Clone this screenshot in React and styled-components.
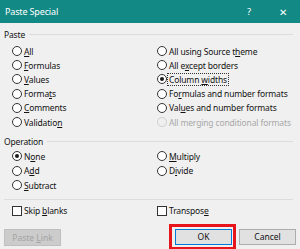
import React from "react";
import styled, { createGlobalStyle } from "styled-components";

const Global = createGlobalStyle`
  html, body { margin: 0; padding: 0; background: #f0f0f0; }
  body { font-family: "Noto Sans", "Liberation Sans", sans-serif; }
`;

const Dialog = styled.div`
  width: 300px;
  height: 249px;
  background: #f0f0f0;
  display: flex;
  flex-direction: column;
  overflow: hidden;
  color: #121212;
  font-size: 8.5px;
  letter-spacing: -0.15px;
`;

const TitleBar = styled.div`
  height: 23px;
  flex: none;
  background: #138985;
  color: #ffffff;
  display: flex;
  align-items: center;
  padding-left: 5px;
  font-size: 9px;
`;

const Title = styled.span`
  flex: 1;
`;

const TitleButton = styled.span`
  width: 34px;
  text-align: center;
  font-size: ${(p) => (p.$small ? "10px" : "9.5px")};
`;

const Body = styled.div`
  flex: 1;
  display: flex;
  flex-direction: column;
  padding: 0 4px;
`;

const SectionHeader = styled.div`
  display: flex;
  align-items: center;
  gap: 4px;
  height: 12px;
  margin-top: ${(p) => p.$top}px;
  margin-right: 3px;
  &::after {
    content: "";
    flex: 1;
    height: 1px;
    background: #dcdcdc;
  }
`;

const Options = styled.div`
  display: grid;
  grid-template-columns: 145px 1fr;
  grid-auto-rows: ${(p) => p.$row}px;
  grid-auto-flow: ${(p) => (p.$flow ? p.$flow : "row")};
  grid-template-rows: ${(p) => (p.$rows ? `repeat(${p.$rows}, ${p.$row}px)` : "none")};
  padding-left: 8px;
  margin-top: ${(p) => p.$top}px;
`;

const Option = styled.div`
  display: flex;
  align-items: center;
  gap: 0;
  white-space: nowrap;
  color: ${(p) => (p.$disabled ? "#a8a8a8" : "inherit")};
`;

const Radio = styled.span`
  width: 10px;
  height: 10px;
  box-sizing: border-box;
  border-radius: 50%;
  border: 1px solid ${(p) => (p.$disabled ? "#cfcfcf" : "#333333")};
  background: ${(p) => (p.$disabled ? "#f0f0f0" : "#ffffff")};
  display: flex;
  align-items: center;
  justify-content: center;
  flex: none;
  &::after {
    content: "";
    width: 4px;
    height: 4px;
    border-radius: 50%;
    background: ${(p) => (p.$checked ? "#1c1c1c" : "transparent")};
  }
`;

const Check = styled.span`
  width: 10px;
  height: 10px;
  box-sizing: border-box;
  border: 1px solid #333333;
  background: #ffffff;
  flex: none;
`;

const Label = styled.span`
  border: 1px ${(p) => (p.$focus ? "dotted #333" : "solid transparent")};
  padding: 0 1px;
  line-height: 11px;
`;

const Acc = styled.u`
  text-decoration: underline;
  text-underline-offset: 1px;
  text-decoration-thickness: 1px;
`;

const Separator = styled.div`
  height: 1px;
  background: #dcdcdc;
  margin: ${(p) => p.$top}px 3px 0 0;
`;

const Buttons = styled.div`
  display: flex;
  align-items: flex-start;
  gap: 7px;
  margin-top: ${(p) => p.$top}px;
`;

const Button = styled.button`
  width: 57px;
  height: ${(p) => (p.$tall ? 17 : 16)}px;
  box-sizing: border-box;
  padding: 0;
  font: inherit;
  font-size: 8.5px;
  color: ${(p) => (p.$disabled ? "#a3a3a3" : "#121212")};
  background: ${(p) => (p.$disabled ? "#cccccc" : "#e1e1e1")};
  border: 1px solid ${(p) => (p.$disabled ? "#bfbfbf" : p.$default ? "#0078d7" : "#adadad")};
  margin-right: ${(p) => (p.$push ? "auto" : "0")};
`;

const Highlight = styled.span`
  position: relative;
  display: inline-flex;
  &::after {
    content: "";
    position: absolute;
    left: -6px;
    right: -4px;
    top: -5px;
    bottom: -5px;
    border: 3px solid #e8141c;
    pointer-events: none;
  }
`;

const O = ({ children, checked, disabled, focus }) => (
  <Option $disabled={disabled}>
    <Radio $checked={checked} $disabled={disabled} />
    <Label $focus={focus}>{children}</Label>
  </Option>
);

export default function App() {
  return (
    <>
      <Global />
      <Dialog>
        <TitleBar>
          <Title>Paste Special</Title>
          <TitleButton>?</TitleButton>
          <TitleButton $small>✕</TitleButton>
        </TitleBar>
        <Body>
          <SectionHeader $top={5}>Paste</SectionHeader>
          <Options $row={14.2} $top={4} $flow="column" $rows={6}>
            <O><Acc>A</Acc>ll</O>
            <O><Acc>F</Acc>ormulas</O>
            <O><Acc>V</Acc>alues</O>
            <O>Forma<Acc>t</Acc>s</O>
            <O><Acc>C</Acc>omments</O>
            <O>Validatio<Acc>n</Acc></O>
            <O>All using Source t<Acc>h</Acc>eme</O>
            <O>All e<Acc>x</Acc>cept borders</O>
            <O checked focus>Column <Acc>w</Acc>idths</O>
            <O>Fo<Acc>r</Acc>mulas and number formats</O>
            <O>Val<Acc>u</Acc>es and number formats</O>
            <O disabled>All merging conditional formats</O>
          </Options>
          <SectionHeader $top={6}>Operation</SectionHeader>
          <Options $row={14.5} $top={2} $flow="column" $rows={3}>
            <O checked>N<Acc>o</Acc>ne</O>
            <O>A<Acc>d</Acc>d</O>
            <O><Acc>S</Acc>ubtract</O>
            <O><Acc>M</Acc>ultiply</O>
            <O>D<Acc>i</Acc>vide</O>
          </Options>
          <Separator $top={6} />
          <Options $row={14} $top={4}>
            <Option>
              <Check />
              <Label>Skip <Acc>b</Acc>lanks</Label>
            </Option>
            <Option>
              <Check />
              <Label>Transpos<Acc>e</Acc></Label>
            </Option>
          </Options>
          <Buttons $top={11}>
            <Button $disabled $tall $push disabled>Paste <Acc>L</Acc>ink</Button>
            <Highlight>
              <Button $default>OK</Button>
            </Highlight>
            <Button>Cancel</Button>
          </Buttons>
        </Body>
      </Dialog>
    </>
  );
}
